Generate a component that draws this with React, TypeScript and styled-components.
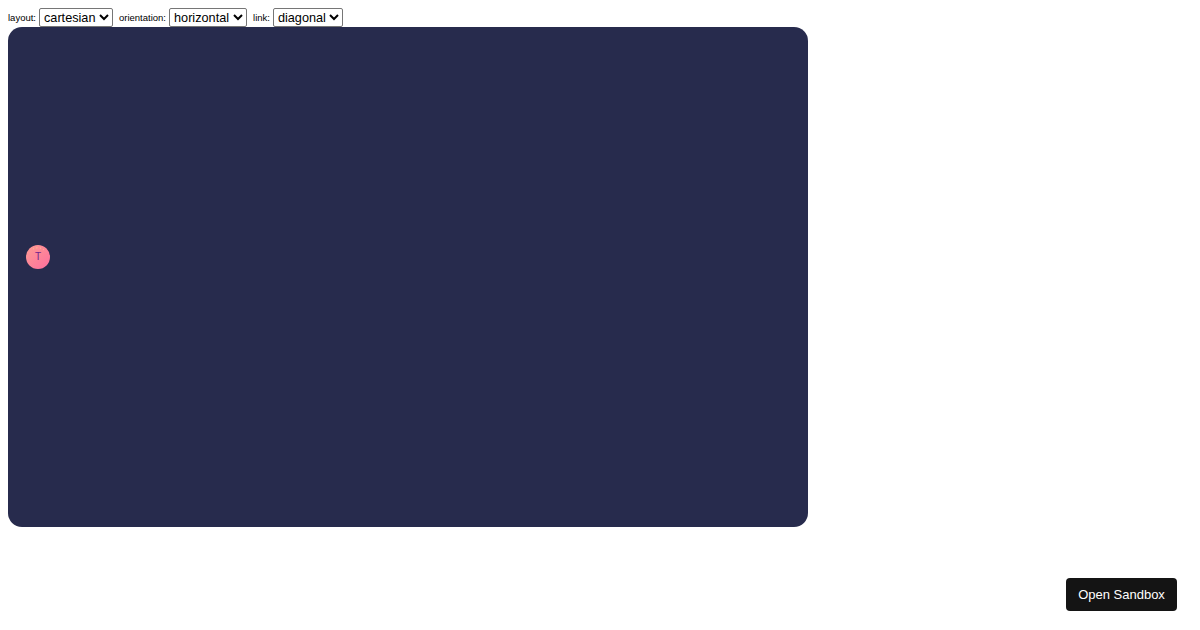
import React, { useState } from 'react'
import styled, { createGlobalStyle } from 'styled-components'

const GlobalStyle = createGlobalStyle`
  body {
    margin: 8px;
    font-family: "Liberation Sans", Arial, sans-serif;
    background: #ffffff;
  }
`;

const Controls = styled.div`
  display: flex;
  align-items: center;
  height: 19px;
  font-size: 9.5px;
  color: #000;
`;

const Label = styled.label`
  display: flex;
  align-items: center;
  margin-right: 6px;
`;

const Select = styled.select`
  font-family: "Liberation Sans", Arial, sans-serif;
  font-size: 12.7px;
  height: 19px;
  margin-left: 3px;
  padding: 0;
  border: 1px solid #767676;
  border-radius: 2px;
  background: #fff;
  color: #000;
`;

const Chart = styled.svg`
  display: block;
`;

const SandboxButton = styled.button`
  position: fixed;
  right: 23px;
  bottom: 19px;
  width: 111px;
  height: 33px;
  border: none;
  border-radius: 4px;
  background: #141414;
  color: #fff;
  font-family: "Liberation Sans", Arial, sans-serif;
  font-size: 13px;
  cursor: pointer;
`;

export default function App() {
  const [layout, setLayout] = useState('cartesian');
  const [orientation, setOrientation] = useState('horizontal');
  const [linkType, setLinkType] = useState('diagonal');

  return (
    <>
      <GlobalStyle />
      <Controls>
        <Label>
          layout:
          <Select value={layout} onChange={(e) => setLayout(e.target.value)}>
            <option value="cartesian">cartesian</option>
            <option value="polar">polar</option>
          </Select>
        </Label>
        <Label>
          orientation:
          <Select value={orientation} onChange={(e) => setOrientation(e.target.value)}>
            <option value="vertical">vertical</option>
            <option value="horizontal">horizontal</option>
          </Select>
        </Label>
        <Label>
          link:
          <Select value={linkType} onChange={(e) => setLinkType(e.target.value)}>
            <option value="diagonal">diagonal</option>
            <option value="step">step</option>
            <option value="curve">curve</option>
            <option value="line">line</option>
          </Select>
        </Label>
      </Controls>
      <Chart width={800} height={500}>
        <defs>
          <linearGradient id="links-gradient" x1="0" y1="0" x2="1" y2="1">
            <stop offset="0%" stopColor="#fd9b93" />
            <stop offset="100%" stopColor="#fe6e9e" />
          </linearGradient>
        </defs>
        <rect width={800} height={500} rx={14} fill="#272b4d" />
        <g transform="translate(30, 230)">
          <circle r={12} fill="url(#links-gradient)" />
          <path d="M-5 -8 A10 10 0 0 1 6 -7" stroke="#ffe27a" strokeWidth={1} strokeDasharray="1 2.5" fill="none" opacity={0.8} />
          <text dy=".33em" fontSize={10} fontFamily="Liberation Sans, Arial, sans-serif" textAnchor="middle" fill="#71248e">
            T
          </text>
        </g>
      </Chart>
      <SandboxButton>Open Sandbox</SandboxButton>
    </>
  )
}
